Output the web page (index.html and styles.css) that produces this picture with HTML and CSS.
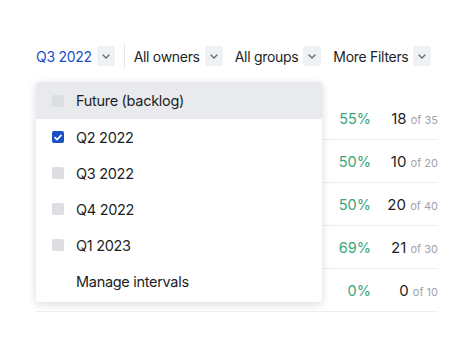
FILE: index.html
```html
<!DOCTYPE html>
<html lang="en">
  <head>
    <meta charset="UTF-8" />
    <meta name="viewport" content="width=device-width, initial-scale=1.0" />
    <title>Goals</title>
    <link rel="stylesheet" href="styles.css">
  </head>
  <body>
    <div class="page">
      <div class="filter-bar">
        <div class="filter active">
          <span>Q3 2022</span>
          <span class="chevron">
            <svg width="8" height="5" viewBox="0 0 8 5"><path d="M1 1l3 3 3-3" fill="none" stroke="#5b6270" stroke-width="1.2" stroke-linecap="round" stroke-linejoin="round"/></svg>
          </span>
        </div>
        <div class="divider"></div>
        <div class="filter">
          <span>All owners</span>
          <span class="chevron">
            <svg width="8" height="5" viewBox="0 0 8 5"><path d="M1 1l3 3 3-3" fill="none" stroke="#5b6270" stroke-width="1.2" stroke-linecap="round" stroke-linejoin="round"/></svg>
          </span>
        </div>
        <div class="filter">
          <span>All groups</span>
          <span class="chevron">
            <svg width="8" height="5" viewBox="0 0 8 5"><path d="M1 1l3 3 3-3" fill="none" stroke="#5b6270" stroke-width="1.2" stroke-linecap="round" stroke-linejoin="round"/></svg>
          </span>
        </div>
        <div class="filter">
          <span>More Filters</span>
          <span class="chevron">
            <svg width="8" height="5" viewBox="0 0 8 5"><path d="M1 1l3 3 3-3" fill="none" stroke="#5b6270" stroke-width="1.2" stroke-linecap="round" stroke-linejoin="round"/></svg>
          </span>
        </div>
      </div>

      <div class="content">
        <div class="goal-list">
          <div class="goal-row"><span class="pct">55%</span><span class="count">18 <small>of 35</small></span></div>
          <div class="goal-row"><span class="pct">50%</span><span class="count">10 <small>of 20</small></span></div>
          <div class="goal-row"><span class="pct">50%</span><span class="count">20 <small>of 40</small></span></div>
          <div class="goal-row"><span class="pct">69%</span><span class="count">21 <small>of 30</small></span></div>
          <div class="goal-row"><span class="pct">0%</span><span class="count">0 <small>of 10</small></span></div>
        </div>

        <div class="dropdown">
          <div class="option hover"><span class="check"></span>Future (backlog)</div>
          <div class="option">
            <span class="check checked">
              <svg width="8" height="7" viewBox="0 0 8 7"><path d="M1 3.6l2 2 4-4.2" fill="none" stroke="#fff" stroke-width="1.6" stroke-linecap="round" stroke-linejoin="round"/></svg>
            </span>Q2 2022
          </div>
          <div class="option"><span class="check"></span>Q3 2022</div>
          <div class="option"><span class="check"></span>Q4 2022</div>
          <div class="option"><span class="check"></span>Q1 2023</div>
          <div class="option"><span class="check blank"></span>Manage intervals</div>
        </div>
      </div>
    </div>
  </body>
</html>
```

FILE: styles.css
```css
body {
  margin: 0;
  background-color: #fff;
  font-family: "Inter", "Noto Sans", sans-serif;
  color: #1c1f26;
}

.page {
  padding: 44px 36px 0 36px;
}

.filter-bar {
  display: flex;
  align-items: center;
  height: 24px;
  font-size: 14px;
  letter-spacing: -0.3px;
  white-space: nowrap;
}

.filter {
  display: flex;
  align-items: center;
  flex-shrink: 0;
  gap: 5px;
  margin-right: 12px;
}

.filter.active {
  color: #1b4fc4;
}

.chevron {
  display: flex;
  align-items: center;
  justify-content: center;
  width: 18px;
  height: 20px;
  background-color: #f0f1f4;
  border-radius: 2px;
}

.divider {
  flex-shrink: 0;
  width: 1px;
  height: 24px;
  background-color: #e3e5e9;
  margin: 0 9px 0 -3px;
}

.content {
  position: relative;
  margin-top: 29px;
}

.goal-list {
  width: 402px;
}

.goal-row {
  display: flex;
  align-items: center;
  justify-content: flex-end;
  height: 42px;
  border-bottom: 1px solid #eceef1;
}

.pct {
  color: #3aa57a;
  font-size: 14.5px;
  text-align: right;
  width: 60px;
}

.count {
  width: 67px;
  text-align: right;
  font-size: 15px;
}

.count small {
  font-size: 11px;
  color: #9ea3ab;
}

.dropdown {
  position: absolute;
  top: -15px;
  left: 0;
  width: 286px;
  padding-bottom: 3px;
  background-color: #fff;
  border-radius: 3px;
  box-shadow: 0 2px 8px rgba(20, 25, 40, 0.16);
  font-size: 14.5px;
  letter-spacing: -0.3px;
}

.option {
  display: flex;
  align-items: center;
  height: 36px;
  padding-left: 16px;
}

.option.hover {
  height: 37px;
  background-color: #e9eaee;
  border-radius: 3px 3px 0 0;
}

.check {
  display: flex;
  align-items: center;
  justify-content: center;
  width: 12px;
  height: 12px;
  margin-right: 12px;
  background-color: #dcdee3;
  border-radius: 2px;
}

.check.checked {
  background-color: #1b4fc4;
}

.check.blank {
  background-color: transparent;
}
```
